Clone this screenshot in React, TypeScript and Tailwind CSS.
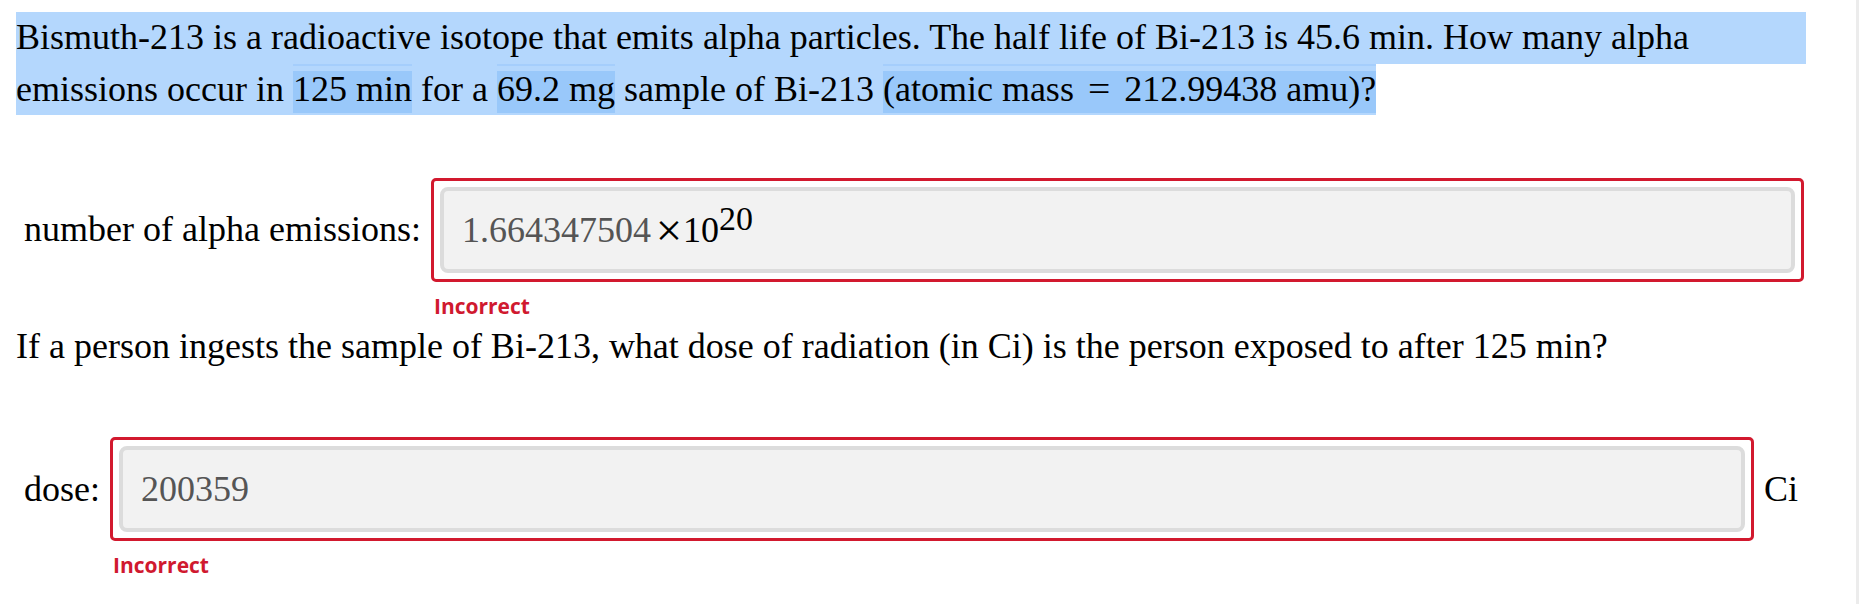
import React from "react";

function Hl({ children }: { children: React.ReactNode }) {
  return (
    <span className="inline-block h-[50px] leading-[50px] align-top bg-[linear-gradient(to_bottom,#a5cefc_0px,#a5cefc_2px,transparent_2px,transparent_7px,#99c8fa_7px,#99c8fa_49px,transparent_49px)]">
      {children}
    </span>
  );
}

function AnswerBox({ children }: { children: React.ReactNode }) {
  return (
    <div className="border-[3px] border-[#d2192e] rounded-[5px] p-[6px]">
      <div className="h-[86px] border-[4px] border-[#dcdcdc] bg-[#f2f2f2] rounded-[8px] pl-[18px] leading-[78px] text-[#555555] whitespace-nowrap">
        {children}
      </div>
    </div>
  );
}

function Incorrect() {
  return (
    <div className="mt-[10px] pl-[3px] font-['Open_Sans','Noto_Sans',sans-serif] text-[21px] font-bold leading-[29px] text-[#d0192f]">
      Incorrect
    </div>
  );
}

export default function App() {
  return (
    <div className="w-[1859px] h-[604px] bg-white border-r-[3px] border-[#ececec] pl-[16px] pt-[12px] font-['Liberation_Serif','Times_New_Roman',serif] text-[36px] text-black overflow-hidden">
      <div className="w-[1790px]">
        <div className="h-[51.5px] bg-[#b4d7fd] leading-[50px] whitespace-nowrap">
          Bismuth-213 is a radioactive isotope that emits alpha particles. The half life of Bi-213 is 45.6 min. How many alpha
        </div>
        <div className="h-[51.5px] leading-[50px] whitespace-nowrap">
          <span className="inline-block h-[51.5px] bg-[#b4d7fd] align-top leading-[50px]">
            emissions occur in <Hl>125 min</Hl> for a <Hl>69.2 mg</Hl> sample of Bi-213{" "}
            <Hl>
              (atomic mass<span className="inline-block mx-[15px] scale-x-[1.1]">=</span>212.99438 amu)?
            </Hl>
          </span>
        </div>

        <div className="mt-[63px] flex items-start pl-[8px] pr-[2px] gap-[10px]">
          <div className="h-[104px] flex items-center leading-[51.43px] whitespace-nowrap">
            number of alpha emissions:
          </div>
          <div className="flex-1 flex flex-col">
            <AnswerBox>
              <span>1.664347504</span>
              <span className="inline-block w-[28px] ml-[4px] text-center text-black scale-[1.3]">×</span>
              <span className="text-black">10</span>
              <span className="text-black text-[34px] leading-none align-[12px]">20</span>
            </AnswerBox>
            <Incorrect />
          </div>
        </div>

        <div className="leading-[51.43px] whitespace-nowrap">
          If a person ingests the sample of Bi-213, what dose of radiation (in Ci) is the person exposed to after 125 min?
        </div>

        <div className="mt-[65px] flex items-start pl-[8px] gap-[10px]">
          <div className="h-[104px] flex items-center leading-[51.43px] whitespace-nowrap">
            dose:
          </div>
          <div className="flex-1 flex flex-col">
            <AnswerBox>
              <span>200359</span>
            </AnswerBox>
            <Incorrect />
          </div>
          <div className="h-[104px] flex items-center leading-[51.43px] pr-[8px]">
            Ci
          </div>
        </div>
      </div>
    </div>
  );
}
